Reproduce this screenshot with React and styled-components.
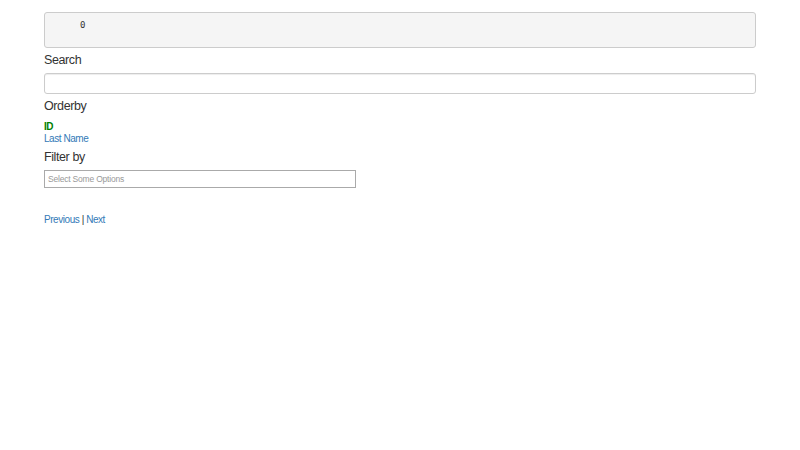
import styled, { createGlobalStyle } from "styled-components"

const GlobalStyle = createGlobalStyle`
    html, body {
        margin: 0;
        padding: 0;
        background: #fff;
        font-family: "Liberation Sans", Arial, sans-serif;
        color: #333;
    }
`

const Container = styled.div`
    width: 712px;
    margin: 0 auto;
    padding-top: 12px;
`

const Pre = styled.pre`
    margin: 0;
    height: 36px;
    box-sizing: border-box;
    padding: 6px 0 0 35px;
    background: #f5f5f5;
    border: 1px solid #ccc;
    border-radius: 3px;
    font-family: "DejaVu Sans Mono", "Liberation Mono", monospace;
    font-size: 9px;
    line-height: 12px;
    color: #333;
`

const Label = styled.h4`
    margin: 5px 0 6px;
    font-size: 12.5px;
    letter-spacing: -0.4px;
    font-weight: normal;
    line-height: 14px;
    color: #333;
`

const SearchInput = styled.input`
    display: block;
    width: 100%;
    height: 21px;
    box-sizing: border-box;
    border: 1px solid #ccc;
    border-radius: 3px;
    box-shadow: inset 0 1px 1px rgba(0, 0, 0, 0.075);
    outline: none;
`

const OrderList = styled.div`
    display: flex;
    flex-direction: column;
    padding-top: 2px;
    font-size: 10px;
    letter-spacing: -0.45px;
    line-height: 12px;
`

const OrderLink = styled.a`
    color: ${(p) => (p.$active ? "#008000" : "#337ab7")};
    font-weight: ${(p) => (p.$active ? "bold" : "normal")};
    text-decoration: none;
`

const Select = styled.div`
    width: 312px;
    height: 18px;
    box-sizing: border-box;
    border: 1px solid #aaa;
    padding: 0 3px;
    display: flex;
    align-items: center;
    font-size: 8.5px;
    letter-spacing: -0.2px;
    color: #999;
    background: #fff;
`

const Pager = styled.div`
    margin-top: 26px;
    font-size: 10px;
    letter-spacing: -0.45px;
    line-height: 12px;
    color: #333;
`

const PagerLink = styled.a`
    color: #337ab7;
    text-decoration: none;
`

const App = () => {
    return (
        <>
            <GlobalStyle />
            <Container>
                <Pre>0</Pre>
                <Label>Search</Label>
                <SearchInput type="text" />
                <Label>Orderby</Label>
                <OrderList>
                    <OrderLink href="#" $active>ID</OrderLink>
                    <OrderLink href="#">Last Name</OrderLink>
                </OrderList>
                <Label>Filter by</Label>
                <Select>Select Some Options</Select>
                <Pager>
                    <PagerLink href="#">Previous</PagerLink> | <PagerLink href="#">Next</PagerLink>
                </Pager>
            </Container>
        </>
    )
}

export default App
